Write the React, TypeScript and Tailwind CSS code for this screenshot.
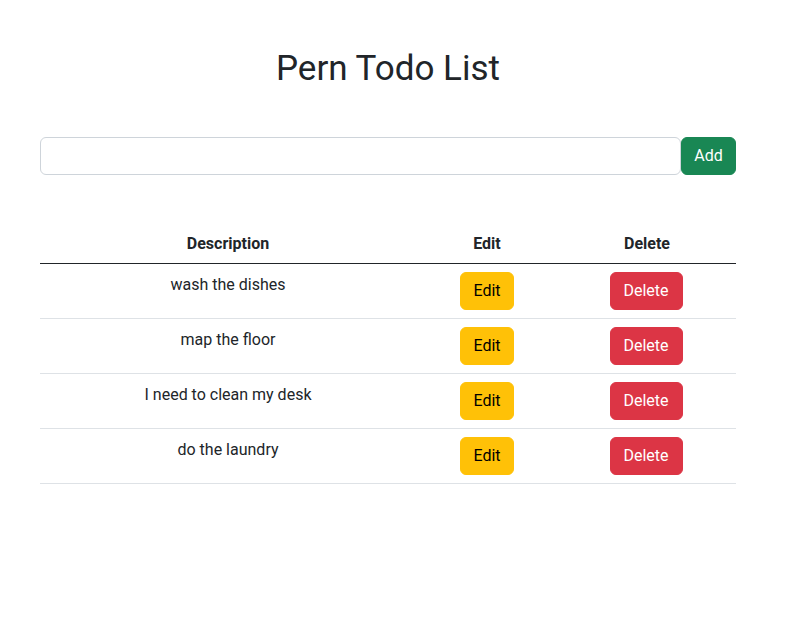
import React from "react";

const todos = ["wash the dishes", "map the floor", "I need to clean my desk", "do the laundry"];

export default function App() {
  return (
    <div
      className="min-h-[628px] bg-white text-[#212529] text-base leading-6"
      style={{ fontFamily: "Roboto, 'Liberation Sans', Arial, sans-serif" }}
    >
      <div className="ml-[40px] w-[696px]">
        <h1 className="pt-[48px] text-center text-[35px] leading-[41px] font-normal">Pern Todo List</h1>
        <div className="mt-[48px] flex">
          <input
            type="text"
            className="h-[38px] flex-1 rounded-[6px] border border-[#ced4da] bg-white px-3 outline-none"
          />
          <button className="h-[38px] w-[55px] rounded-[6px] border border-[#198754] bg-[#198754] text-white">
            Add
          </button>
        </div>
        <div className="mt-[48px]">
          <div className="flex border-b border-[#212529] font-bold">
            <div className="w-[376px] px-2 pt-[9px] pb-[7px] text-center">Description</div>
            <div className="w-[142px] px-2 pt-[9px] pb-[7px] text-center">Edit</div>
            <div className="w-[178px] px-2 pt-[9px] pb-[7px] text-center">Delete</div>
          </div>
          {todos.map((t) => (
            <div key={t} className="flex border-b border-[#dee2e6]">
              <div className="w-[376px] px-2 pt-[9px] pb-2 text-center">{t}</div>
              <div className="flex w-[142px] justify-center p-2">
                <button className="h-[38px] w-[54px] rounded-[6px] border border-[#ffc107] bg-[#ffc107] text-black">
                  Edit
                </button>
              </div>
              <div className="flex w-[178px] justify-center p-2 pr-[10px]">
                <button className="h-[38px] w-[73px] rounded-[6px] border border-[#dc3545] bg-[#dc3545] text-white">
                  Delete
                </button>
              </div>
            </div>
          ))}
        </div>
      </div>
    </div>
  );
}
